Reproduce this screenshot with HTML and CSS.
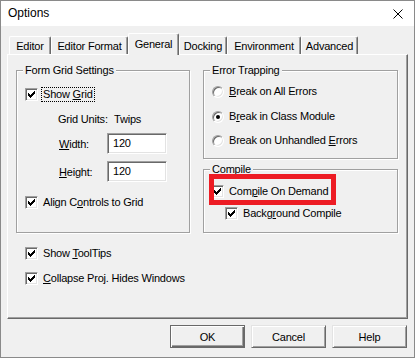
FILE: index.html
```html
<!DOCTYPE html>
<html>
<head>
<meta charset="utf-8">
<link rel="stylesheet" href="styles.css">
</head>
<body>
<div class="window">
  <div class="titlebar">
    <span class="title">Options</span>
    <svg class="close" width="10" height="10" viewBox="0 0 10 10"><path d="M0.5 0.5L9.5 9.5M9.5 0.5L0.5 9.5" stroke="#000" stroke-width="1" fill="none"/></svg>
  </div>
  <div class="tabs">
    <div class="tab tab-editor">Editor</div>
    <div class="tab tab-format">Editor Format</div>
    <div class="tab tab-general tab-active">General</div>
    <div class="tab tab-docking">Docking</div>
    <div class="tab tab-env">Environment</div>
    <div class="tab tab-adv">Advanced</div>
  </div>
  <div class="panel">
    <div class="col col-left">
      <div class="frame frame-grid">
        <div class="frame-title">Form Grid Settings</div>
        <div class="check-row row-showgrid">
          <span class="checkbox"><svg width="7" height="7" viewBox="0 0 7 7"><path d="M6 0h1v1h-1zM5 1h2v1h-2zM0 2h1v1h-1zM4 2h3v1h-3zM0 3h2v1h-2zM3 3h3v1h-3zM0 4h5v1h-5zM1 5h3v1h-3zM2 6h1v1h-1z" fill="#000" shape-rendering="crispEdges"/></svg></span>
          <span class="label focus">Show <u>G</u>rid</span>
        </div>
        <div class="units-row"><span class="units-label">Grid Units:</span><span>Twips</span></div>
        <div class="field-row"><span class="field-label"><u>W</u>idth:</span><span class="textbox">120</span></div>
        <div class="field-row"><span class="field-label"><u>H</u>eight:</span><span class="textbox">120</span></div>
        <div class="check-row row-align">
          <span class="checkbox"><svg width="7" height="7" viewBox="0 0 7 7"><path d="M6 0h1v1h-1zM5 1h2v1h-2zM0 2h1v1h-1zM4 2h3v1h-3zM0 3h2v1h-2zM3 3h3v1h-3zM0 4h5v1h-5zM1 5h3v1h-3zM2 6h1v1h-1z" fill="#000" shape-rendering="crispEdges"/></svg></span>
          <span class="label">Align C<u>o</u>ntrols to Grid</span>
        </div>
      </div>
      <div class="check-row row-tooltips">
        <span class="checkbox"><svg width="7" height="7" viewBox="0 0 7 7"><path d="M6 0h1v1h-1zM5 1h2v1h-2zM0 2h1v1h-1zM4 2h3v1h-3zM0 3h2v1h-2zM3 3h3v1h-3zM0 4h5v1h-5zM1 5h3v1h-3zM2 6h1v1h-1z" fill="#000" shape-rendering="crispEdges"/></svg></span>
        <span class="label">Show <u>T</u>oolTips</span>
      </div>
      <div class="check-row row-collapse">
        <span class="checkbox"><svg width="7" height="7" viewBox="0 0 7 7"><path d="M6 0h1v1h-1zM5 1h2v1h-2zM0 2h1v1h-1zM4 2h3v1h-3zM0 3h2v1h-2zM3 3h3v1h-3zM0 4h5v1h-5zM1 5h3v1h-3zM2 6h1v1h-1z" fill="#000" shape-rendering="crispEdges"/></svg></span>
        <span class="label"><u>C</u>ollapse Proj. Hides Windows</span>
      </div>
    </div>
    <div class="col col-right">
      <div class="frame frame-error">
        <div class="frame-title">Error Trapping</div>
        <div class="radio-row row-r1"><span class="radio"></span><span class="label"><u>B</u>reak on All Errors</span></div>
        <div class="radio-row row-r2"><span class="radio checked"><span class="dot"></span></span><span class="label">B<u>r</u>eak in Class Module</span></div>
        <div class="radio-row row-r3"><span class="radio"></span><span class="label">Break on Unhandled <u>E</u>rrors</span></div>
      </div>
      <div class="frame frame-compile">
        <div class="frame-title">Compile</div>
        <div class="check-row row-compile">
          <span class="checkbox"><svg width="7" height="7" viewBox="0 0 7 7"><path d="M6 0h1v1h-1zM5 1h2v1h-2zM0 2h1v1h-1zM4 2h3v1h-3zM0 3h2v1h-2zM3 3h3v1h-3zM0 4h5v1h-5zM1 5h3v1h-3zM2 6h1v1h-1z" fill="#000" shape-rendering="crispEdges"/></svg></span>
          <span class="label">Com<u>p</u>ile On Demand</span>
        </div>
        <div class="check-row row-bg">
          <span class="checkbox"><svg width="7" height="7" viewBox="0 0 7 7"><path d="M6 0h1v1h-1zM5 1h2v1h-2zM0 2h1v1h-1zM4 2h3v1h-3zM0 3h2v1h-2zM3 3h3v1h-3zM0 4h5v1h-5zM1 5h3v1h-3zM2 6h1v1h-1z" fill="#000" shape-rendering="crispEdges"/></svg></span>
          <span class="label">Backg<u>r</u>ound Compile</span>
        </div>
        <div class="annotation"></div>
      </div>
    </div>
  </div>
  <div class="buttons">
    <div class="btn btn-default">OK</div>
    <div class="btn">Cancel</div>
    <div class="btn">Help</div>
  </div>
</div>
</body>
</html>
```

FILE: styles.css
```css
* { box-sizing: border-box; }
html, body { margin: 0; padding: 0; }
body {
  width: 415px;
  height: 358px;
  background: #f0f0f0;
  font-family: "Liberation Sans", Arial, sans-serif;
  font-size: 11px;
  letter-spacing: -0.2px;
  color: #000;
}
u { text-decoration: underline; text-underline-offset: 1px; }

.window {
  width: 415px;
  height: 358px;
  border: 1px solid #8a8a8a;
  background: #f0f0f0;
  display: flex;
  flex-direction: column;
}

.titlebar {
  height: 25px;
  flex: none;
  background: #fff;
  display: flex;
  align-items: center;
  padding-left: 7px;
  font-size: 12px;
  letter-spacing: 0;
}
.title { line-height: 25px; }
.close { margin-left: auto; margin-right: 11px; display: block; }

.tabs {
  display: flex;
  align-items: flex-end;
  height: 21px;
  flex: none;
  margin: 7px 0 0 8px;
}
.tab {
  height: 18px;
  display: flex;
  align-items: center;
  justify-content: center;
  border-top: 1px solid #fff;
  border-left: 1px solid #fff;
  border-right: 1px solid #696969;
  box-shadow: inset -1px 0 #a0a0a0;
  border-radius: 2px 2px 0 0;
  background: #f0f0f0;
  white-space: nowrap;
}
.tab-active {
  height: 22px;
  margin-bottom: -1px;
  position: relative;
  z-index: 1;
  padding-bottom: 2px;
}
.tab-editor { width: 42px; }
.tab-format { width: 77px; }
.tab-general { width: 51px; }
.tab-docking { width: 48px; }
.tab-env { width: 74px; }
.tab-adv { width: 57px; }

.panel {
  flex: none;
  margin: 0 6px;
  height: 265px;
  border: 1px solid;
  border-color: #fff #696969 #696969 #fff;
  box-shadow: inset -1px -1px #a0a0a0;
  display: flex;
  gap: 13px;
  padding: 15px 9px 0 8px;
}
.col { display: flex; flex-direction: column; }
.col-left { width: 174px; }
.col-right { width: 195px; }

.frame {
  border: 1px solid #a0a0a0;
  box-shadow: inset 1px 1px #fff, 1px 1px #fff;
}
.frame-title {
  display: table;
  margin: -7px 0 0 6px;
  padding: 0 2px;
  background: #f0f0f0;
  line-height: 13px;
  white-space: nowrap;
}
.frame-grid { height: 163px; }
.frame-error { height: 89px; }
.frame-compile { height: 64px; margin-top: 10px; position: relative; }

.check-row, .radio-row {
  display: flex;
  align-items: center;
  height: 15px;
  white-space: nowrap;
}
.label {
  padding: 0 1px;
  border: 1px dotted transparent;
  line-height: 13px;
}
.focus { border-color: #000; }

.checkbox {
  width: 13px;
  height: 13px;
  flex: none;
  background: #fff;
  border: 1px solid;
  border-color: #a0a0a0 #fff #fff #a0a0a0;
  box-shadow: inset 1px 1px #696969, inset -1px -1px #e3e3e3;
  margin-right: 3px;
}
.checkbox svg { display: block; margin: 2px 0 0 2px; }

.radio {
  width: 12px;
  height: 12px;
  flex: none;
  border-radius: 50%;
  background: #fff;
  border: 1px solid;
  border-color: #a0a0a0 #fff #fff #a0a0a0;
  box-shadow: inset 1px 1px #696969, inset -1px -1px #e3e3e3;
  margin-right: 3px;
  display: flex;
  align-items: center;
  justify-content: center;
}
.dot { width: 4px; height: 4px; border-radius: 50%; background: #000; }

.row-showgrid { margin: 10px 0 0 8px; }
.units-row { margin: 10px 0 0 41px; height: 14px; line-height: 14px; display: flex; white-space: nowrap; }
.units-label { width: 56px; }
.field-row { margin: 7px 0 0 42px; height: 21px; display: flex; align-items: center; }
.field-label { width: 48px; }
.textbox {
  width: 60px;
  height: 21px;
  background: #fff;
  border: 1px solid;
  border-color: #a0a0a0 #fff #fff #a0a0a0;
  box-shadow: inset 1px 1px #696969, inset -1px -1px #e3e3e3;
  padding-left: 5px;
  line-height: 19px;
}
.row-align { margin: 13px 0 0 8px; }
.row-tooltips { margin: 13px 0 0 9px; }
.row-collapse { margin: 10px 0 0 9px; }

.row-r1 { margin: 7px 0 0 8px; }
.row-r2 { margin: 10px 0 0 8px; }
.row-r3 { margin: 9px 0 0 8px; }

.row-compile { margin: 8px 0 0 7px; }
.row-bg { margin: 7px 0 0 21px; }

.annotation {
  position: absolute;
  left: 5px;
  top: 4px;
  width: 127px;
  height: 31px;
  border: 5px solid #ed1c24;
}

.buttons {
  flex: none;
  display: flex;
  justify-content: flex-end;
  gap: 6px;
  margin-top: 6px;
  padding-right: 7px;
}
.btn {
  width: 75px;
  height: 23px;
  display: flex;
  align-items: center;
  justify-content: center;
  background: #f0f0f0;
  border: 1px solid;
  border-color: #e3e3e3 #696969 #696969 #e3e3e3;
  box-shadow: inset 1px 1px #fff, inset -1px -1px #a0a0a0;
}
.btn-default {
  border-color: #696969;
  box-shadow: inset 1px 1px #fff, inset -1px -1px #696969, inset -2px -2px #a0a0a0;
}
```
